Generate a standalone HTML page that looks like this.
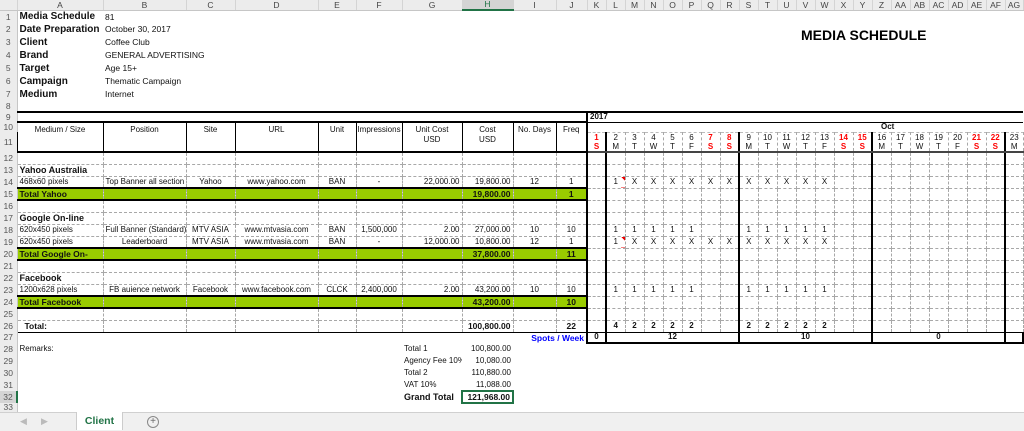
<!DOCTYPE html>
<html><head><meta charset="utf-8"><style>
body{margin:0;width:1024px;height:430px;overflow:hidden;background:#fff;font-family:"Liberation Sans",Arial,sans-serif;position:relative}
table{border-collapse:collapse;table-layout:fixed;width:1024px;position:absolute;left:0;top:0}
td{padding:0 2px;font-size:8px;white-space:nowrap;overflow:hidden;border:1px dashed #a8a8a8;line-height:1;color:#111}
tr.n td{border:none}
td.rn{background:#ececec;border:none;border-right:1px solid #c6c6c6;text-align:center;color:#555;padding:0;font-size:8.5px}
tr.hdr td{background:#ececec;border:none;border-right:1px solid #d4d4d4;border-bottom:1px solid #c6c6c6;text-align:center;color:#444;font-size:8.5px;padding:0}
.lb{font-weight:bold;font-size:10px}
.v{font-size:8.5px}
.hd{border:1px solid #000;border-top:2px solid #000;border-bottom:2px solid #000;vertical-align:top;text-align:center;padding:2px 0 0;white-space:normal;line-height:10px}
.oct{border:none;border-top:1px solid #000;border-left:2px solid #000;font-weight:bold;padding-left:293px;text-align:left}
tr.dh td{border:1px dashed #a8a8a8;border-top:1px dashed #bbb;border-bottom:2px solid #444;line-height:9px;text-align:center;padding:0}
tr.dh td.rn{border:none;border-right:1px solid #c6c6c6}
tr.dh td:nth-child(2),tr.dh td:nth-child(3),tr.dh td:nth-child(10),tr.dh td:nth-child(17),tr.dh td:nth-child(24){border-left:2px solid #000}
.r{color:#f00;font-weight:bold}
tr.d td:nth-child(12),tr.d td:nth-child(13),tr.d td:nth-child(20),tr.d td:nth-child(27),tr.d td:nth-child(34){border-left:2px solid #000}
tr.d td:nth-child(n+12){text-align:center;padding:0}
tr.d td:nth-child(2){text-align:left}
tr.d td:nth-child(3),tr.d td:nth-child(4),tr.d td:nth-child(5),tr.d td:nth-child(6),tr.d td:nth-child(7),tr.d td:nth-child(10),tr.d td:nth-child(11){text-align:center}
tr.d td:nth-child(8),tr.d td:nth-child(9){text-align:right}
tr.gr td:nth-child(n+2):nth-child(-n+11){background:#99cc00;border-top:2px solid #000;border-bottom:2px solid #000;font-weight:bold;font-size:8.5px}
tr.gr td:nth-child(11){border-right:2px solid #000}
.sec{font-weight:bold;font-size:9px}
tr.tot td:nth-child(n+2):nth-child(-n+11){border-bottom:1px solid #000;font-weight:bold;font-size:8.5px}
tr.tot td:nth-child(n+12){font-weight:bold}
.tri{background:linear-gradient(225deg,#e00 3px,transparent 3px)}
.b27{border:1px solid #000;border-left:2px solid #000;border-right:2px solid #000;border-bottom:2px solid #000;text-align:center;font-weight:bold;padding:0}
.sw{border:none;color:#00f;font-weight:bold;text-align:right;font-size:8.5px}
tr.n td.rn{border-right:1px solid #c6c6c6}
</style></head><body>
<table>
<colgroup><col style="width:17px"><col style="width:86px"><col style="width:83px"><col style="width:49px"><col style="width:83px"><col style="width:38px"><col style="width:46px"><col style="width:60px"><col style="width:51px"><col style="width:43px"><col style="width:31px">
<col style="width:19px"><col style="width:19px"><col style="width:19px"><col style="width:19px"><col style="width:19px"><col style="width:19px"><col style="width:19px"><col style="width:19px"><col style="width:19px"><col style="width:19px"><col style="width:19px"><col style="width:19px"><col style="width:19px"><col style="width:19px"><col style="width:19px"><col style="width:19px"><col style="width:19px"><col style="width:19px"><col style="width:19px"><col style="width:19px"><col style="width:19px"><col style="width:19px"><col style="width:18px"></colgroup>
<tr class="hdr" style="height:10px"><td></td><td>A</td><td>B</td><td>C</td><td>D</td><td>E</td><td>F</td><td>G</td><td style="background:#d4d4d4;border-bottom:2px solid #217346;color:#217346">H</td><td>I</td><td>J</td><td>K</td><td>L</td><td>M</td><td>N</td><td>O</td><td>P</td><td>Q</td><td>R</td><td>S</td><td>T</td><td>U</td><td>V</td><td>W</td><td>X</td><td>Y</td><td>Z</td><td>AA</td><td>AB</td><td>AC</td><td>AD</td><td>AE</td><td>AF</td><td>AG</td></tr>
<tr class="n" style="height:13px"><td class="rn">1</td><td class="lb">Media Schedule</td><td colspan="3" class="v">81</td><td colspan="29"></td></tr>
<tr class="n" style="height:13px"><td class="rn">2</td><td class="lb">Date Preparation</td><td colspan="3" class="v">October 30, 2017</td><td colspan="29"></td></tr>
<tr class="n" style="height:13px"><td class="rn">3</td><td class="lb">Client</td><td colspan="3" class="v">Coffee Club</td><td colspan="29"></td></tr>
<tr class="n" style="height:13px"><td class="rn">4</td><td class="lb">Brand</td><td colspan="3" class="v">GENERAL ADVERTISING</td><td colspan="29"></td></tr>
<tr class="n" style="height:13px"><td class="rn">5</td><td class="lb">Target</td><td colspan="3" class="v">Age 15+</td><td colspan="29"></td></tr>
<tr class="n" style="height:13px"><td class="rn">6</td><td class="lb">Campaign</td><td colspan="3" class="v">Thematic Campaign</td><td colspan="29"></td></tr>
<tr class="n" style="height:13px"><td class="rn">7</td><td class="lb">Medium</td><td colspan="3" class="v">Internet</td><td colspan="29"></td></tr>
<tr class="n" style="height:11px"><td class="rn">8</td><td colspan="33"></td></tr>
<tr class="n" style="height:10px"><td class="rn">9</td><td colspan="10" style="border-top:2px solid #000"></td><td colspan="23" style="border-top:2px solid #000;border-left:2px solid #000;font-weight:bold;text-align:left">2017</td></tr>
<tr style="height:10px"><td class="rn">10</td><td class="hd" rowspan="2">Medium / Size</td><td class="hd" rowspan="2">Position</td><td class="hd" rowspan="2">Site</td><td class="hd" rowspan="2">URL</td><td class="hd" rowspan="2">Unit</td><td class="hd" rowspan="2">Impressions</td><td class="hd" rowspan="2">Unit Cost<br>USD</td><td class="hd" rowspan="2">Cost<br>USD</td><td class="hd" rowspan="2">No. Days</td><td class="hd" rowspan="2">Freq</td><td colspan="23" class="oct">Oct</td></tr>
<tr class="dh" style="height:20px"><td class="rn">11</td><td class="r">1<br>S</td><td>2<br>M</td><td>3<br>T</td><td>4<br>W</td><td>5<br>T</td><td>6<br>F</td><td class="r">7<br>S</td><td class="r">8<br>S</td><td>9<br>M</td><td>10<br>T</td><td>11<br>W</td><td>12<br>T</td><td>13<br>F</td><td class="r">14<br>S</td><td class="r">15<br>S</td><td>16<br>M</td><td>17<br>T</td><td>18<br>W</td><td>19<br>T</td><td>20<br>F</td><td class="r">21<br>S</td><td class="r">22<br>S</td><td>23<br>M</td></tr>
<tr class="d" style="height:12px"><td class="rn">12</td><td></td><td></td><td></td><td></td><td></td><td></td><td></td><td></td><td></td><td></td><td></td><td></td><td></td><td></td><td></td><td></td><td></td><td></td><td></td><td></td><td></td><td></td><td></td><td></td><td></td><td></td><td></td><td></td><td></td><td></td><td></td><td></td><td></td></tr>
<tr class="d" style="height:12px"><td class="rn">13</td><td class="sec">Yahoo Australia</td><td></td><td></td><td></td><td></td><td></td><td></td><td></td><td></td><td></td><td></td><td></td><td></td><td></td><td></td><td></td><td></td><td></td><td></td><td></td><td></td><td></td><td></td><td></td><td></td><td></td><td></td><td></td><td></td><td></td><td></td><td></td><td></td></tr>
<tr class="d" style="height:12px"><td class="rn">14</td><td>468x60 pixels</td><td>Top Banner all section</td><td>Yahoo</td><td>www.yahoo.com</td><td>BAN</td><td>-</td><td>22,000.00</td><td>19,800.00</td><td>12</td><td>1</td><td></td><td class="tri">1</td><td>X</td><td>X</td><td>X</td><td>X</td><td>X</td><td>X</td><td>X</td><td>X</td><td>X</td><td>X</td><td>X</td><td></td><td></td><td></td><td></td><td></td><td></td><td></td><td></td><td></td><td></td></tr>
<tr class="d gr" style="height:12px"><td class="rn">15</td><td>Total Yahoo</td><td></td><td></td><td></td><td></td><td></td><td></td><td>19,800.00</td><td></td><td>1</td><td></td><td></td><td></td><td></td><td></td><td></td><td></td><td></td><td></td><td></td><td></td><td></td><td></td><td></td><td></td><td></td><td></td><td></td><td></td><td></td><td></td><td></td><td></td></tr>
<tr class="d" style="height:12px"><td class="rn">16</td><td></td><td></td><td></td><td></td><td></td><td></td><td></td><td></td><td></td><td></td><td></td><td></td><td></td><td></td><td></td><td></td><td></td><td></td><td></td><td></td><td></td><td></td><td></td><td></td><td></td><td></td><td></td><td></td><td></td><td></td><td></td><td></td><td></td></tr>
<tr class="d" style="height:12px"><td class="rn">17</td><td class="sec">Google On-line</td><td></td><td></td><td></td><td></td><td></td><td></td><td></td><td></td><td></td><td></td><td></td><td></td><td></td><td></td><td></td><td></td><td></td><td></td><td></td><td></td><td></td><td></td><td></td><td></td><td></td><td></td><td></td><td></td><td></td><td></td><td></td><td></td></tr>
<tr class="d" style="height:12px"><td class="rn">18</td><td>620x450 pixels</td><td>Full Banner (Standard)</td><td>MTV ASIA</td><td>www.mtvasia.com</td><td>BAN</td><td>1,500,000</td><td>2.00</td><td>27,000.00</td><td>10</td><td>10</td><td></td><td>1</td><td>1</td><td>1</td><td>1</td><td>1</td><td></td><td></td><td>1</td><td>1</td><td>1</td><td>1</td><td>1</td><td></td><td></td><td></td><td></td><td></td><td></td><td></td><td></td><td></td><td></td></tr>
<tr class="d" style="height:12px"><td class="rn">19</td><td>620x450 pixels</td><td>Leaderboard</td><td>MTV ASIA</td><td>www.mtvasia.com</td><td>BAN</td><td>-</td><td>12,000.00</td><td>10,800.00</td><td>12</td><td>1</td><td></td><td class="tri">1</td><td>X</td><td>X</td><td>X</td><td>X</td><td>X</td><td>X</td><td>X</td><td>X</td><td>X</td><td>X</td><td>X</td><td></td><td></td><td></td><td></td><td></td><td></td><td></td><td></td><td></td><td></td></tr>
<tr class="d gr" style="height:12px"><td class="rn">20</td><td>Total Google On-</td><td></td><td></td><td></td><td></td><td></td><td></td><td>37,800.00</td><td></td><td>11</td><td></td><td></td><td></td><td></td><td></td><td></td><td></td><td></td><td></td><td></td><td></td><td></td><td></td><td></td><td></td><td></td><td></td><td></td><td></td><td></td><td></td><td></td><td></td></tr>
<tr class="d" style="height:12px"><td class="rn">21</td><td></td><td></td><td></td><td></td><td></td><td></td><td></td><td></td><td></td><td></td><td></td><td></td><td></td><td></td><td></td><td></td><td></td><td></td><td></td><td></td><td></td><td></td><td></td><td></td><td></td><td></td><td></td><td></td><td></td><td></td><td></td><td></td><td></td></tr>
<tr class="d" style="height:12px"><td class="rn">22</td><td class="sec">Facebook</td><td></td><td></td><td></td><td></td><td></td><td></td><td></td><td></td><td></td><td></td><td></td><td></td><td></td><td></td><td></td><td></td><td></td><td></td><td></td><td></td><td></td><td></td><td></td><td></td><td></td><td></td><td></td><td></td><td></td><td></td><td></td><td></td></tr>
<tr class="d" style="height:12px"><td class="rn">23</td><td>1200x628 pixels</td><td>FB auience network</td><td>Facebook</td><td>www.facebook.com</td><td>CLCK</td><td>2,400,000</td><td>2.00</td><td>43,200.00</td><td>10</td><td>10</td><td></td><td>1</td><td>1</td><td>1</td><td>1</td><td>1</td><td></td><td></td><td>1</td><td>1</td><td>1</td><td>1</td><td>1</td><td></td><td></td><td></td><td></td><td></td><td></td><td></td><td></td><td></td><td></td></tr>
<tr class="d gr" style="height:12px"><td class="rn">24</td><td>Total Facebook</td><td></td><td></td><td></td><td></td><td></td><td></td><td>43,200.00</td><td></td><td>10</td><td></td><td></td><td></td><td></td><td></td><td></td><td></td><td></td><td></td><td></td><td></td><td></td><td></td><td></td><td></td><td></td><td></td><td></td><td></td><td></td><td></td><td></td><td></td></tr>
<tr class="d" style="height:12px"><td class="rn">25</td><td></td><td></td><td></td><td></td><td></td><td></td><td></td><td></td><td></td><td></td><td></td><td></td><td></td><td></td><td></td><td></td><td></td><td></td><td></td><td></td><td></td><td></td><td></td><td></td><td></td><td></td><td></td><td></td><td></td><td></td><td></td><td></td><td></td></tr>
<tr class="d tot" style="height:12px"><td class="rn">26</td><td style="padding-left:7px">Total:</td><td></td><td></td><td></td><td></td><td></td><td></td><td>100,800.00</td><td></td><td>22</td><td></td><td>4</td><td>2</td><td>2</td><td>2</td><td>2</td><td></td><td></td><td>2</td><td>2</td><td>2</td><td>2</td><td>2</td><td></td><td></td><td></td><td></td><td></td><td></td><td></td><td></td><td></td><td></td></tr>
<tr style="height:11px"><td class="rn">27</td><td colspan="8" style="border:none"></td><td colspan="2" class="sw">Spots / Week</td><td class="b27">0</td><td colspan="7" class="b27">12</td><td colspan="7" class="b27">10</td><td colspan="7" class="b27">0</td><td class="b27"></td></tr>
<tr class="n" style="height:12px"><td class="rn">28</td><td>Remarks:</td><td colspan="5"></td><td>Total 1</td><td style="text-align:right">100,800.00</td><td colspan="24"></td></tr>
<tr class="n" style="height:12px"><td class="rn">29</td><td></td><td colspan="5"></td><td>Agency Fee 10%</td><td style="text-align:right">10,080.00</td><td colspan="24"></td></tr>
<tr class="n" style="height:12px"><td class="rn">30</td><td></td><td colspan="5"></td><td>Total 2</td><td style="text-align:right">110,880.00</td><td colspan="24"></td></tr>
<tr class="n" style="height:12px"><td class="rn">31</td><td></td><td colspan="5"></td><td>VAT 10%</td><td style="text-align:right">11,088.00</td><td colspan="24"></td></tr>
<tr class="n" style="height:12px"><td class="rn" style="background:#d4d4d4;border-right:2px solid #217346">32</td><td></td><td colspan="5"></td><td style="font-weight:bold;font-size:9px">Grand Total</td><td style="text-align:right;font-weight:bold;font-size:8.5px;border:2px solid #217346">121,968.00</td><td colspan="24"></td></tr>
<tr class="n" style="height:9px"><td class="rn">33</td><td colspan="33"></td></tr>
</table>
<div style="position:absolute;left:801px;top:27px;font-weight:bold;font-size:14px;color:#000">MEDIA SCHEDULE</div>
<div style="position:absolute;left:0;top:412px;width:1024px;height:18px;background:#f0f0f0;border-top:1px solid #d0d0d0">
<span style="position:absolute;left:20px;top:3px;color:#bbb;font-size:9px">&#9664;</span>
<span style="position:absolute;left:41px;top:3px;color:#bbb;font-size:9px">&#9654;</span>
<div style="position:absolute;left:76px;top:-1px;width:45px;height:18px;background:#fff;border-left:1px solid #ccc;border-right:1px solid #ccc;text-align:center;font-weight:bold;font-size:10.5px;color:#217346;line-height:18px">Client</div>
<div style="position:absolute;left:147px;top:3px;width:10px;height:10px;border:1px solid #888;border-radius:50%;text-align:center;line-height:10px;font-size:10px;color:#666">+</div>
</div>
</body></html>
